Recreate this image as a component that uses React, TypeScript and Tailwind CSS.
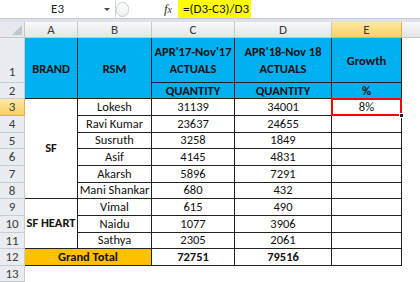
import React from 'react';

// Excel-style sheet: growth formula example

const font = { fontFamily: 'Carlito, Lato, "Liberation Sans", sans-serif' };

type Row = { rsm: string; c: number; d: number };

const rows: Row[] = [
  { rsm: 'Lokesh', c: 31139, d: 34001 },
  { rsm: 'Ravi Kumar', c: 23637, d: 24655 },
  { rsm: 'Susruth', c: 3258, d: 1849 },
  { rsm: 'Asif', c: 4145, d: 4831 },
  { rsm: 'Akarsh', c: 5896, d: 7291 },
  { rsm: 'Mani Shankar', c: 680, d: 432 },
  { rsm: 'Vimal', c: 615, d: 490 },
  { rsm: 'Naidu', c: 1077, d: 3906 },
  { rsm: 'Sathya', c: 2305, d: 2061 },
];

const cell = 'flex items-center justify-center border-r border-b border-[#222] text-[12.5px] text-[#111] leading-none';
const head = 'flex items-center justify-center border-r border-b border-[#222] bg-[#00b0f0] text-[12.5px] font-bold text-[#111] text-center leading-[17px]';
const rowHead = 'flex items-center justify-center border-r border-b border-[#c7ccd3] bg-[#e9ecf0] text-[13px] text-[#3b3b3b]';
const colHead = 'flex items-center justify-center border-r border-b border-[#c3c7cc] bg-gradient-to-b from-[#f7f8f9] to-[#e3e6ea] text-[13px] text-[#3b3b3b]';
const active = 'flex items-center justify-center border-r border-b border-[#e2b24a] bg-gradient-to-b from-[#fde9a6] to-[#f9d060] text-[13px] text-[#3b3b3b]';

export default function App() {
  return (
    <div className="w-[420px] h-[282px] overflow-hidden bg-white" style={font}>
      {/* Formula bar */}
      <div className="flex h-[19px] border-b border-[#c6cbd1] bg-white">
        <div className="relative flex w-[116px] items-center justify-center border-r border-[#d0d4d9] text-[13px] text-[#222]">
          E3
          <span className="absolute right-[5px] top-[8px] h-0 w-0 border-x-[3px] border-t-[3px] border-x-transparent border-t-[#444]" />
        </div>
        <div className="flex w-[14px] items-center">
          <div className="h-[15px] w-[13px] rounded-full border border-[#c9cdd2] bg-gradient-to-b from-white to-[#eceff2]" />
        </div>
        <div className="flex w-[48px] items-center justify-end pr-[6px] text-[13px] italic text-[#333]" style={{ fontFamily: '"Liberation Serif", serif' }}>
          f<span className="text-[10px]">x</span>
        </div>
        <div className="flex h-[18px] items-center bg-[#ffff00] pl-[5px] pr-[2px] text-[13px] text-[#111]">=(D3-C3)/D3</div>
        <div className="flex-1" />
      </div>
      <div className="h-[3px] bg-[#dde2e8]" />

      {/* Sheet grid */}
      <div className="grid grid-cols-[25px_53px_74px_83px_97px_70px_18px] grid-rows-[16px_45px_16px_17px_17px_16px_17px_17px_16px_17px_17px_16px_17px_16px]">
        {/* column headers */}
        <div className="relative border-r border-b border-[#c3c7cc] bg-[#e6e9ed]">
          <svg className="absolute left-[12px] top-[3px]" width="10" height="10" viewBox="0 0 10 10">
            <polygon points="10,0 10,10 0,10" fill="#c2c7cd" />
          </svg>
        </div>
        {['A', 'B', 'C', 'D'].map(l => (
          <div key={l} className={colHead}>{l}</div>
        ))}
        <div className={active}>E</div>
        <div className="border-b border-[#c3c7cc] bg-gradient-to-b from-[#f7f8f9] to-[#e3e6ea]" />

        {/* rows 1-2 */}
        <div className="flex items-end justify-center border-r border-b border-[#c7ccd3] bg-[#e9ecf0] pb-[1px] text-[13px] text-[#3b3b3b]">1</div>
        <div className={head + ' row-span-2'}>BRAND</div>
        <div className={head + ' row-span-2'}>RSM</div>
        <div className={head}>APR'17-Nov'17<br />ACTUALS</div>
        <div className={head}>APR'18-Nov 18<br />ACTUALS</div>
        <div className={head}>Growth</div>
        <div className="row-span-2" />

        <div className={rowHead}>2</div>
        <div className={head}>QUANTITY</div>
        <div className={head}>QUANTITY</div>
        <div className={head}>%</div>

        {/* data rows */}
        {rows.map((r, i) => {
          const n = i + 3;
          return (
            <React.Fragment key={r.rsm}>
              <div className={n === 3 ? active : rowHead}>{n}</div>
              {n === 3 && <div className={cell + ' row-span-6 font-bold'}>SF</div>}
              {n === 9 && <div className={cell + ' row-span-3 font-bold'}>SF HEART</div>}
              <div className={cell + ' whitespace-nowrap'}>{r.rsm}</div>
              <div className={cell}>{r.c}</div>
              <div className={cell}>{r.d}</div>
              {n === 3 ? (
                <div className={cell + ' relative'}>
                  <div className="absolute inset-x-[-1px] top-[-1px] bottom-[-1px] border-2 border-[#ff0000]" />
                  <span className="absolute right-[-3px] bottom-[-3px] h-[5px] w-[5px] border border-white bg-[#222]" />
                  8%
                </div>
              ) : (
                <div className={cell} />
              )}
              <div />
            </React.Fragment>
          );
        })}

        {/* row 12 */}
        <div className={rowHead}>12</div>
        <div className="col-span-2 flex items-center justify-center border-r border-b border-[#222] bg-[#ffc000] text-[12.5px] font-bold text-[#111]">Grand Total</div>
        <div className={cell + ' font-bold'}>72751</div>
        <div className={cell + ' font-bold'}>79516</div>
        <div className={cell} />
        <div />

        {/* row 13 */}
        <div className={rowHead}>13</div>
        <div className="col-span-6" />
      </div>
    </div>
  );
}
